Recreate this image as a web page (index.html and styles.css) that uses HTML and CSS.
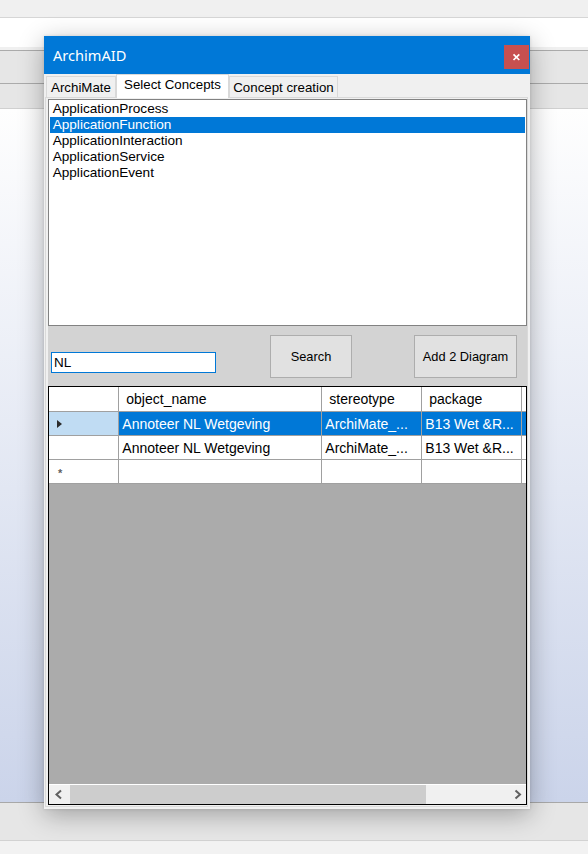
FILE: index.html
```html
<!DOCTYPE html>
<html>
<head>
<meta charset="utf-8">
<title>ArchimAID</title>
<link rel="stylesheet" href="styles.css">
</head>
<body>
<div class="desktop">
  <div class="bar-top"></div>
  <div class="bar-white"></div>
  <div class="bar-sep"></div>
  <div class="bar-gray1"></div>
  <div class="bar-gray2"></div>
  <div class="canvas"></div>
  <div class="bar-bottom"></div>
  <div class="bar-foot"></div>

  <div class="dialog">
    <div class="titlebar">
      <span class="title">ArchimAID</span>
      <span class="close">
        <svg width="25" height="24" viewBox="0 0 25 24"><path d="M9.5 9.3 L15.3 15 M15.3 9.3 L9.5 15" stroke="#fff" stroke-width="1.7" fill="none"/></svg>
      </span>
    </div>
    <div class="body">
      <div class="tabs">
        <div class="tab tab-a">ArchiMate</div>
        <div class="tab tab-b active">Select Concepts</div>
        <div class="tab tab-c">Concept creation</div>
      </div>
      <div class="panel">
        <div class="listbox">
          <div class="item">ApplicationProcess</div>
          <div class="item sel">ApplicationFunction</div>
          <div class="item">ApplicationInteraction</div>
          <div class="item">ApplicationService</div>
          <div class="item">ApplicationEvent</div>
        </div>
        <div class="searchbar">
          <div class="textbox">NL</div>
          <div class="btn btn-search">Search</div>
          <div class="btn btn-add">Add 2 Diagram</div>
        </div>
        <div class="grid">
          <div class="row head">
            <div class="cell rh"></div>
            <div class="cell c1">object_name</div>
            <div class="cell c2">stereotype</div>
            <div class="cell c3">package</div>
            <div class="cell c4"></div>
          </div>
          <div class="row selrow">
            <div class="cell rh"><span class="arrow"></span></div>
            <div class="cell c1">Annoteer NL Wetgeving</div>
            <div class="cell c2">ArchiMate_...</div>
            <div class="cell c3">B13 Wet &amp;R...</div>
            <div class="cell c4"></div>
          </div>
          <div class="row">
            <div class="cell rh"></div>
            <div class="cell c1">Annoteer NL Wetgeving</div>
            <div class="cell c2">ArchiMate_...</div>
            <div class="cell c3">B13 Wet &amp;R...</div>
            <div class="cell c4"></div>
          </div>
          <div class="row">
            <div class="cell rh"><span class="star">*</span></div>
            <div class="cell c1"></div>
            <div class="cell c2"></div>
            <div class="cell c3"></div>
            <div class="cell c4"></div>
          </div>
          <div class="grid-empty"></div>
          <div class="hscroll">
            <div class="sbtn">
              <svg width="21" height="19" viewBox="0 0 21 19"><polyline points="12,5.5 7.5,9.5 12,13.5" stroke="#606060" stroke-width="2" fill="none"/></svg>
            </div>
            <div class="thumb"></div>
            <div class="track"></div>
            <div class="sbtn">
              <svg width="21" height="19" viewBox="0 0 21 19"><polyline points="10.5,5.5 15,9.5 10.5,13.5" stroke="#606060" stroke-width="2" fill="none"/></svg>
            </div>
          </div>
        </div>
      </div>
    </div>
  </div>
</div>
</body>
</html>
```

FILE: styles.css
```css
* { box-sizing: border-box; }
html, body { margin: 0; padding: 0; }
body {
  font-family: "Liberation Sans", Arial, sans-serif;
  color: #000;
}
.desktop {
  position: relative;
  width: 588px;
  height: 854px;
  overflow: hidden;
}
.bar-top { height: 18px; background: #f0f0f0; border-bottom: 1px solid #d6d6d6; }
.bar-white { height: 29px; background: #fff; }
.bar-sep { height: 4px; background: #f0f0f0; border-bottom: 1px solid #ababab; }
.bar-gray1 { height: 33px; background: #e6e6e6; border-bottom: 1px solid #ababab; }
.bar-gray2 { height: 25px; background: #e6e6e6; border-bottom: 1px solid #d0d0d0; }
.canvas {
  height: 694px;
  background: linear-gradient(#fefefe, #cbd4ea);
  border-bottom: 1px solid #a8a8a8;
}
.bar-bottom { height: 38px; background: #e6e6e6; border-bottom: 1px solid #d2d2d2; }
.bar-foot { height: 13px; background: #f2f2f2; }

.dialog {
  position: absolute;
  left: 44px;
  top: 36px;
  width: 486px;
  height: 773px;
  background: #f0f0f0;
  box-shadow: 0 6px 24px rgba(0, 0, 0, 0.3), 0 0 3px rgba(0, 0, 0, 0.12);
  display: flex;
  flex-direction: column;
}
.titlebar {
  height: 38px;
  background: #0078d7;
  display: flex;
  align-items: flex-start;
  justify-content: space-between;
  flex-shrink: 0;
}
.title {
  font-family: "Noto Sans", "Open Sans", sans-serif;
  font-size: 14.6px;
  color: #fff;
  padding-left: 9px;
  line-height: 38px;
}
.close {
  width: 25px;
  height: 24px;
  margin-top: 9px;
  margin-right: 1px;
  background: #c75050;
  display: block;
}
.close svg { display: block; }

.body {
  height: 735px;
  display: flex;
  flex-direction: column;
}
.tabs {
  height: 23px;
  display: flex;
  align-items: flex-end;
  padding-left: 2px;
  flex-shrink: 0;
}
.tab {
  height: 21px;
  font-size: 13.3px;
  border: 1px solid #d9d9d9;
  border-bottom: none;
  background: #f0f0f0;
  display: flex;
  align-items: center;
  justify-content: center;
  white-space: nowrap;
  padding-top: 1px;
}
.tab-a { width: 70px; }
.tab-b { width: 113px; }
.tab-c { width: 109px; }
.tab.active {
  height: 24px;
  margin-bottom: -1px;
  background: #fff;
  position: relative;
  z-index: 1;
  padding-top: 0;
  padding-bottom: 4px;
}

.panel {
  height: 710px;
  margin-left: 1px;
  margin-right: 2px;
  border: 1px solid #d9d9d9;
  padding: 1px 0 1px 2px;
  display: flex;
  flex-direction: column;
}
.listbox {
  height: 227px;
  border: 1px solid #828282;
  background: #fff;
  padding: 1px;
  flex-shrink: 0;
}
.item {
  height: 16px;
  line-height: 16px;
  font-size: 13.6px;
  padding-left: 2.7px;
  white-space: nowrap;
}
.item.sel { background: #0078d7; color: #fff; }

.searchbar {
  height: 60px;
  background: #d3d3d3;
  display: flex;
  align-items: flex-start;
  flex-shrink: 0;
}
.textbox {
  margin-left: 3px;
  margin-top: 26px;
  width: 165px;
  height: 21px;
  border: 1px solid #0078d7;
  background: #fff;
  font-size: 13.5px;
  line-height: 19px;
  padding-left: 2px;
}
.btn {
  margin-top: 9px;
  height: 43px;
  background: #e1e1e1;
  border: 1px solid #adadad;
  font-size: 12.8px;
  display: flex;
  align-items: center;
  justify-content: center;
  white-space: nowrap;
}
.btn-search { margin-left: 54px; width: 82px; }
.btn-add { margin-left: 62px; width: 103px; }

.grid {
  height: 419px;
  border: 1px solid #000;
  background: #ababab;
  display: flex;
  flex-direction: column;
  flex-shrink: 0;
}
.row {
  display: flex;
  height: 24px;
  flex-shrink: 0;
}
.row.head { height: 25px; }
.cell {
  height: 100%;
  flex-shrink: 0;
  background: #fff;
  border-right: 1px solid #a0a0a0;
  border-bottom: 1px solid #a0a0a0;
  font-size: 14px;
  display: flex;
  align-items: center;
  padding-left: 3.3px;
  white-space: nowrap;
  overflow: hidden;
}
.head .cell { padding-left: 7.3px; padding-bottom: 1px; }
.rh { width: 70px; }
.row .rh { padding-left: 7px; }
.c1 { width: 203px; }
.c2 { width: 100px; }
.c3 { width: 100px; }
.row .c4 { width: 4px; border-right: none; padding: 0; }
.selrow .cell { background: #0078d7; color: #fff; }
.selrow .cell.rh { background: #c0dcf3; }
.arrow {
  width: 0;
  height: 0;
  border-left: 5px solid #2b2b2b;
  border-top: 4.5px solid transparent;
  border-bottom: 4.5px solid transparent;
  margin-left: 1px;
}
.star {
  font-size: 11px;
  font-weight: bold;
  color: #606060;
  padding-left: 2px;
  padding-top: 2px;
}
.grid-empty { flex: 1; }
.hscroll {
  height: 20px;
  border-top: 1px solid #fff;
  display: flex;
  background: #f0f0f0;
  flex-shrink: 0;
}
.sbtn { width: 21px; height: 19px; background: #f0f0f0; flex-shrink: 0; }
.sbtn svg { display: block; }
.thumb { width: 356px; background: #cdcdcd; flex-shrink: 0; }
.track { flex: 1; background: #f0f0f0; }
```
